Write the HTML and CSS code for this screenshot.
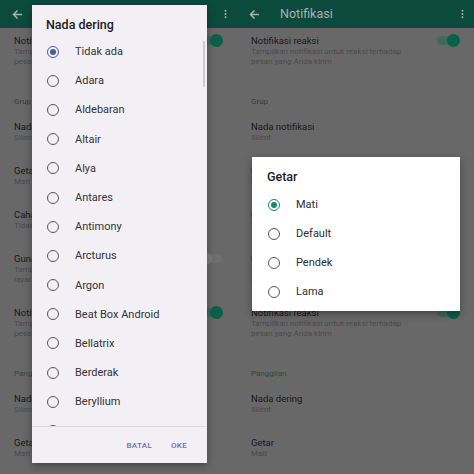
FILE: index.html
```html
<!DOCTYPE html>
<html lang="id">
<head>
<meta charset="utf-8">
<title>Notifikasi</title>
<link rel="stylesheet" href="styles.css">
</head>
<body>
<main class="screens">
  <section class="pane">
    <header class="appbar">
      <svg class="appbar-back" viewBox="0 0 12 12"><path d="M11 6H1.6M6 1.6 1.6 6 6 10.4"/></svg>
      <span class="appbar-title">Notifikasi</span>
      <svg class="appbar-menu" viewBox="0 0 4 12"><circle cx="2" cy="1.6" r="1.3"/><circle cx="2" cy="6" r="1.3"/><circle cx="2" cy="10.4" r="1.3"/></svg>
    </header>
    <div class="prefs">
      <div class="pref pref--top">
        <div class="pref-text"><div class="pref-title">Notifikasi reaksi</div><div class="pref-sub">Tampilkan notifikasi untuk reaksi terhadap<br>pesan yang Anda kirim</div></div>
        <span class="switch switch--on"></span>
      </div>
      <div class="pref-cat">Grup</div>
      <div class="pref"><div class="pref-text"><div class="pref-title">Nada notifikasi</div><div class="pref-sub">Silent</div></div></div>
      <div class="pref"><div class="pref-text"><div class="pref-title">Getar</div><div class="pref-sub">Mati</div></div></div>
      <div class="pref"><div class="pref-text"><div class="pref-title">Cahaya</div><div class="pref-sub">Tidak ada</div></div></div>
      <div class="pref">
        <div class="pref-text"><div class="pref-title">Gunakan notifikasi prioritas tinggi</div><div class="pref-sub">Tampilkan pratinjau notifikasi di bagian atas<br>layar</div></div>
        <span class="switch"></span>
      </div>
      <div class="pref">
        <div class="pref-text"><div class="pref-title">Notifikasi reaksi</div><div class="pref-sub">Tampilkan notifikasi untuk reaksi terhadap<br>pesan yang Anda kirim</div></div>
        <span class="switch switch--on"></span>
      </div>
      <div class="pref-cat pref-cat--accent">Panggilan</div>
      <div class="pref"><div class="pref-text"><div class="pref-title">Nada dering</div><div class="pref-sub">Silent</div></div></div>
      <div class="pref"><div class="pref-text"><div class="pref-title">Getar</div><div class="pref-sub">Mati</div></div></div>
    </div>

    <div class="dialog dialog--ringtone">
      <h2 class="dialog-title">Nada dering</h2>
      <div class="ringtone-list">
        <ul class="choices">
          <li class="choice is-selected"><span class="radio"></span>Tidak ada</li>
          <li class="choice"><span class="radio"></span>Adara</li>
          <li class="choice"><span class="radio"></span>Aldebaran</li>
          <li class="choice"><span class="radio"></span>Altair</li>
          <li class="choice"><span class="radio"></span>Alya</li>
          <li class="choice"><span class="radio"></span>Antares</li>
          <li class="choice"><span class="radio"></span>Antimony</li>
          <li class="choice"><span class="radio"></span>Arcturus</li>
          <li class="choice"><span class="radio"></span>Argon</li>
          <li class="choice"><span class="radio"></span>Beat Box Android</li>
          <li class="choice"><span class="radio"></span>Bellatrix</li>
          <li class="choice"><span class="radio"></span>Berderak</li>
          <li class="choice"><span class="radio"></span>Beryllium</li>
          <li class="choice"><span class="radio"></span></li>
        </ul>
        <span class="scrollbar"></span>
      </div>
      <div class="dialog-actions">
        <button class="dialog-btn" type="button">BATAL</button>
        <button class="dialog-btn" type="button">OKE</button>
      </div>
    </div>
  </section>

  <section class="pane">
    <header class="appbar">
      <svg class="appbar-back" viewBox="0 0 12 12"><path d="M11 6H1.6M6 1.6 1.6 6 6 10.4"/></svg>
      <span class="appbar-title">Notifikasi</span>
      <svg class="appbar-menu" viewBox="0 0 4 12"><circle cx="2" cy="1.6" r="1.3"/><circle cx="2" cy="6" r="1.3"/><circle cx="2" cy="10.4" r="1.3"/></svg>
    </header>
    <div class="prefs">
      <div class="pref pref--top">
        <div class="pref-text"><div class="pref-title">Notifikasi reaksi</div><div class="pref-sub">Tampilkan notifikasi untuk reaksi terhadap<br>pesan yang Anda kirim</div></div>
        <span class="switch switch--on"></span>
      </div>
      <div class="pref-cat">Grup</div>
      <div class="pref"><div class="pref-text"><div class="pref-title">Nada notifikasi</div><div class="pref-sub">Silent</div></div></div>
      <div class="pref"><div class="pref-text"><div class="pref-title">Getar</div><div class="pref-sub">Mati</div></div></div>
      <div class="pref"><div class="pref-text"><div class="pref-title">Cahaya</div><div class="pref-sub">Tidak ada</div></div></div>
      <div class="pref">
        <div class="pref-text"><div class="pref-title">Gunakan notifikasi prioritas tinggi</div><div class="pref-sub">Tampilkan pratinjau notifikasi di bagian atas<br>layar</div></div>
        <span class="switch"></span>
      </div>
      <div class="pref">
        <div class="pref-text"><div class="pref-title">Notifikasi reaksi</div><div class="pref-sub">Tampilkan notifikasi untuk reaksi terhadap<br>pesan yang Anda kirim</div></div>
        <span class="switch switch--on"></span>
      </div>
      <div class="pref-cat pref-cat--accent">Panggilan</div>
      <div class="pref"><div class="pref-text"><div class="pref-title">Nada dering</div><div class="pref-sub">Silent</div></div></div>
      <div class="pref"><div class="pref-text"><div class="pref-title">Getar</div><div class="pref-sub">Mati</div></div></div>
    </div>

    <div class="dialog dialog--vibrate">
      <h2 class="dialog-title">Getar</h2>
      <ul class="choices">
        <li class="choice choice--wide is-selected"><span class="radio"></span>Mati</li>
        <li class="choice choice--wide"><span class="radio"></span>Default</li>
        <li class="choice choice--wide"><span class="radio"></span>Pendek</li>
        <li class="choice choice--wide"><span class="radio"></span>Lama</li>
      </ul>
    </div>
  </section>
</main>
</body>
</html>
```

FILE: styles.css
```css
* {
  box-sizing: border-box;
  margin: 0;
  padding: 0;
}

html,
body {
  width: 474px;
  height: 474px;
}

body {
  font-family: Roboto, "Noto Sans", sans-serif;
  background: #686868;
  overflow: hidden;
}

.screens {
  display: flex;
  width: 474px;
  height: 474px;
}

.pane {
  position: relative;
  width: 237px;
  height: 474px;
  overflow: hidden;
  background: #686868;
}

/* App bar */
.appbar {
  display: flex;
  align-items: center;
  height: 28px;
  padding: 0 10px 0 12px;
  background: #0d4a3e;
  color: #a6b3af;
}

.appbar-back {
  width: 11px;
  height: 11px;
  fill: none;
  stroke: currentColor;
  stroke-width: 1.6;
}

.appbar-title {
  margin-left: 20px;
  font-size: 12.5px;
  line-height: 16px;
}

.appbar-menu {
  width: 3px;
  height: 10px;
  margin-left: auto;
  fill: currentColor;
}

/* Preference list (dimmed behind dialogs) */
.pref {
  display: flex;
  justify-content: space-between;
  align-items: flex-start;
  padding: 10.5px 15px 10.5px 14px;
}

.pref--top {
  padding-top: 5.5px;
}

.pref-title {
  font-size: 9.5px;
  line-height: 13px;
  color: #181818;
}

.pref-sub {
  font-size: 8px;
  line-height: 10px;
  color: #4a4a4a;
}

.pref-cat {
  padding: 19px 14px 2px;
  font-size: 8px;
  line-height: 11px;
  color: #363d3b;
}

.pref-cat--accent {
  color: #2f4a41;
}

.switch {
  position: relative;
  flex: none;
  width: 22px;
  height: 9px;
  margin-top: 2px;
  border-radius: 5px;
  background: #6f6f6f;
}

.switch::after {
  content: "";
  position: absolute;
  top: -2px;
  left: -1px;
  width: 13px;
  height: 13px;
  border-radius: 50%;
  background: #7d7d7d;
}

.switch--on {
  background: #3f6a5e;
}

.switch--on::after {
  left: auto;
  right: -1px;
  background: #0b6049;
}

/* Dialogs */
.dialog {
  position: absolute;
  display: flex;
  flex-direction: column;
  box-shadow: 0 3px 8px rgba(0, 0, 0, 0.35);
}

.dialog--ringtone {
  top: 5px;
  left: 32px;
  width: 175px;
  height: 458px;
  background: #f2f0f5;
}

.dialog--vibrate {
  top: 157px;
  left: 15px;
  width: 208px;
  height: 154px;
  background: #ffffff;
}

.dialog-title {
  padding: 12px 14px 4px;
  font-size: 12.5px;
  font-weight: 500;
  line-height: 16px;
  color: #1c1c1c;
}

.dialog--vibrate .dialog-title {
  padding: 12px 15px 5px;
}

.ringtone-list {
  position: relative;
  height: 389px;
  overflow: hidden;
}

.choices {
  list-style: none;
}

.choice {
  display: flex;
  align-items: center;
  gap: 16px;
  height: 29.2px;
  padding-left: 15px;
  font-size: 11px;
  color: #333333;
}

.choice--wide {
  height: 29px;
  padding-left: 16px;
  color: #2e2e2e;
}

.radio {
  display: grid;
  place-items: center;
  flex: none;
  width: 12px;
  height: 12px;
  border: 1.5px solid #565656;
  border-radius: 50%;
}

.is-selected .radio {
  border-color: #4b5899;
}

.is-selected .radio::after {
  content: "";
  width: 6px;
  height: 6px;
  border-radius: 50%;
  background: #4b5899;
}

.dialog--vibrate .is-selected .radio {
  border-color: #17876f;
}

.dialog--vibrate .is-selected .radio::after {
  background: #17876f;
}

.scrollbar {
  position: absolute;
  top: 4px;
  right: 2px;
  width: 2.5px;
  height: 46px;
  border-radius: 1px;
  background: #cdcbd0;
}

.dialog-actions {
  flex: 1;
  display: flex;
  justify-content: flex-end;
  align-items: center;
  gap: 19px;
  padding-right: 20px;
  border-top: 1px solid #dedce2;
}

.dialog-btn {
  border: 0;
  background: none;
  font-family: Roboto, "Noto Sans", sans-serif;
  font-size: 8px;
  font-weight: 500;
  letter-spacing: 0.3px;
  color: #6a71a2;
}
```
